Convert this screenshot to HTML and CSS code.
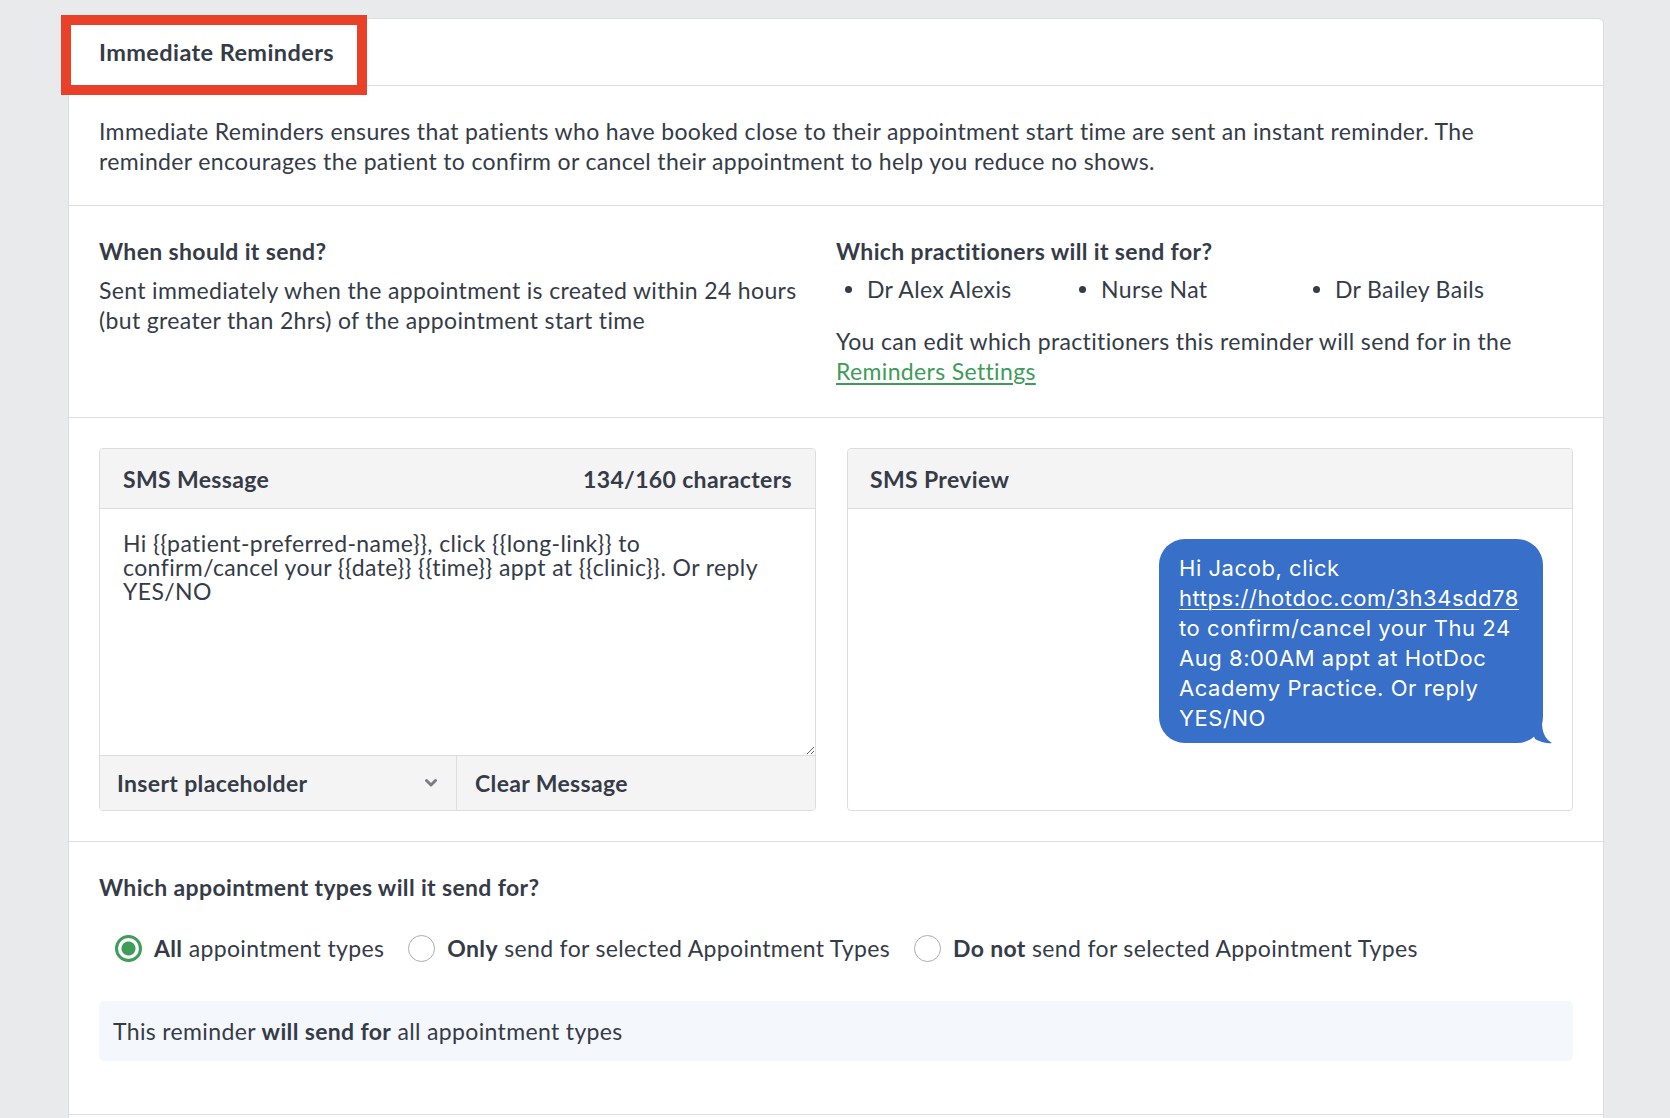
FILE: index.html
```html
<!DOCTYPE html>
<html lang="en">
<head>
<meta charset="utf-8">
<title>Immediate Reminders</title>
<link rel="stylesheet" href="styles.css">
</head>
<body>
<div class="annotation"></div>
<div class="card">
  <div class="card-header">
    <h2 class="card-title">Immediate Reminders</h2>
  </div>

  <section class="section intro">
    <p>Immediate Reminders ensures that patients who have booked close to their appointment start time are sent an instant reminder. The reminder encourages the patient to confirm or cancel their appointment to help you reduce no shows.</p>
  </section>

  <section class="section details">
    <div class="col left">
      <h3 class="label">When should it send?</h3>
      <p class="tight">Sent immediately when the appointment is created within 24 hours (but greater than 2hrs) of the appointment start time</p>
    </div>
    <div class="col">
      <h3 class="label">Which practitioners will it send for?</h3>
      <ul class="practitioners">
        <li>Dr Alex Alexis</li>
        <li>Nurse Nat</li>
        <li>Dr Bailey Bails</li>
      </ul>
      <p class="edit-note">You can edit which practitioners this reminder will send for in the <a href="#" class="link">Reminders Settings</a></p>
    </div>
  </section>

  <section class="section sms">
    <div class="box">
      <div class="box-header">
        <span>SMS Message</span>
        <span>134/160 characters</span>
      </div>
      <textarea class="message" spellcheck="false">Hi {{patient-preferred-name}}, click {{long-link}} to confirm/cancel your {{date}} {{time}} appt at {{clinic}}. Or reply YES/NO</textarea>
      <div class="toolbar">
        <div class="tool select">
          <span>Insert placeholder</span>
          <svg class="chevron" width="14" height="10" viewBox="0 0 14 10"><polyline points="2.5,2.5 7,7 11.5,2.5" fill="none" stroke="#7a7d83" stroke-width="3" stroke-linecap="round" stroke-linejoin="round"/></svg>
        </div>
        <div class="tool">Clear Message</div>
      </div>
    </div>
    <div class="box preview">
      <div class="box-header">
        <span>SMS Preview</span>
      </div>
      <div class="preview-body">
        <div class="bubble">
          Hi Jacob, click<br>
          <span class="bubble-link">https://hotdoc.com/3h34sdd78</span><br>
          to confirm/cancel your Thu 24<br>
          Aug 8:00AM appt at HotDoc<br>
          Academy Practice. Or reply<br>
          YES/NO
          <svg class="tail" width="22" height="22" viewBox="0 0 22 22"><path d="M0 0 H10 C10 10 13 17 20 21 C13 22 7 19 3 17 C2 14 0 10 0 0 Z" fill="#386fc9"/></svg>
        </div>
      </div>
    </div>
  </section>

  <section class="section types">
    <h3 class="label">Which appointment types will it send for?</h3>
    <div class="radios">
      <label class="radio"><span class="dot checked"></span><span><b>All</b> appointment types</span></label>
      <label class="radio"><span class="dot"></span><span><b>Only</b> send for selected Appointment Types</span></label>
      <label class="radio"><span class="dot"></span><span><b>Do not</b> send for selected Appointment Types</span></label>
    </div>
    <div class="info">This reminder <b>will send for</b> all appointment types</div>
  </section>

  <section class="section rest"></section>
</div>
</body>
</html>
```

FILE: styles.css
```css
* { box-sizing: border-box; }

html, body {
  margin: 0;
  padding: 0;
}

body {
  background: #e9eaec;
  font-family: Lato, "Open Sans", Arial, sans-serif;
  color: #353b47;
  font-size: 23px;
  letter-spacing: 0.35px;
  line-height: 30px;
  height: 1118px;
  overflow: hidden;
  padding: 18px 66px 0 68px;
  position: relative;
}

.annotation {
  position: absolute;
  left: 61px;
  top: 15px;
  width: 306px;
  height: 80px;
  border: 10px solid #e9402a;
  z-index: 2;
}

.card {
  background: #fff;
  border: 1px solid #dcdddf;
  border-radius: 0 6px 0 0;
  min-height: 1200px;
}

.card-header {
  padding: 18px 30px;
  border-bottom: 1px solid #dcdddf;
}

.card-title {
  margin: 0;
  font-size: 23.5px;
  letter-spacing: 0.4px;
  line-height: 30px;
  font-weight: 700;
}

.section {
  padding: 30px 30px;
  border-bottom: 1px solid #dcdddf;
}

p { margin: 0; }

.intro {
  padding: 30px 30px 29px;
}

.intro p {
  max-width: 1420px;
}

.details {
  display: grid;
  grid-template-columns: 1fr 1fr;
  padding: 30px 30px 31px;
}

.details .left {
  padding-right: 20px;
}

.label {
  margin: 0;
  font-size: 23px;
  line-height: 30px;
  font-weight: 700;
}

.tight {
  margin-top: 9px;
  line-height: 30px;
}

.practitioners {
  list-style: none;
  margin: 8px 0 0;
  padding: 0 0 0 9px;
  display: grid;
  grid-template-columns: 234px 234px 234px;
}

.practitioners li {
  display: flex;
  align-items: center;
}

.practitioners li::before {
  content: "";
  width: 7px;
  height: 7px;
  border-radius: 50%;
  background: #353b47;
  margin-right: 15px;
  flex: none;
}

.edit-note {
  margin-top: 22px;
}

.link {
  color: #3e9b58;
  text-decoration: underline;
  text-underline-offset: 3px;
}

.sms {
  display: grid;
  grid-template-columns: 717px 1fr;
  column-gap: 31px;
  padding: 30px 30px 30px;
}

.box {
  border: 1px solid #dcdddf;
  border-radius: 4px;
  display: flex;
  flex-direction: column;
  overflow: hidden;
  height: 363px;
}

.box-header {
  background: #f4f4f5;
  border-bottom: 1px solid #dcdddf;
  height: 60px;
  padding: 0 23px;
  display: flex;
  align-items: center;
  justify-content: space-between;
  font-weight: 700;
}

.preview .box-header {
  padding: 0 22px;
}

.message {
  display: block;
  width: 100%;
  height: 247px;
  border: 0;
  border-bottom: 1px solid #dcdddf;
  margin: 0;
  padding: 22px 40px 0 23px;
  font-family: Lato, "Open Sans", Arial, sans-serif;
  font-size: 23px;
  letter-spacing: 0.4px;
  line-height: 24px;
  color: #353b47;
  resize: vertical;
  outline: none;
  background: #fff;
}

.toolbar {
  flex: 1;
  display: grid;
  grid-template-columns: 357px 1fr;
  background: #f4f4f5;
  font-weight: 700;
}

.tool {
  display: flex;
  align-items: center;
  padding: 0 18px;
}

.tool.select {
  justify-content: space-between;
  border-right: 1px solid #dcdddf;
  padding: 0 18px 0 17px;
}

.chevron {
  display: block;
}

.preview-body {
  flex: 1;
  display: flex;
  justify-content: flex-end;
  align-items: flex-start;
  padding: 30px 29px 0 0;
}

.bubble {
  position: relative;
  width: 384px;
  background: #386fc9;
  color: #fff;
  border-radius: 26px;
  padding: 14px 6px 10px 20px;
  font-family: Inter, Roboto, "Helvetica Neue", Arial, sans-serif;
  font-size: 22px;
  line-height: 30px;
  letter-spacing: 0.55px;
  white-space: nowrap;
}

.bubble-link {
  text-decoration: underline;
  text-underline-offset: 3px;
  text-decoration-thickness: 1px;
}

.tail {
  position: absolute;
  right: -11px;
  bottom: -1px;
}

.types {
  padding: 30px 30px 53px;
}

.radios {
  display: flex;
  gap: 24px;
  margin-top: 31px;
  padding-left: 16px;
}

.radio {
  display: flex;
  align-items: center;
  gap: 12px;
  white-space: nowrap;
}

.radio b { font-weight: 700; }

.dot {
  width: 27px;
  height: 27px;
  border-radius: 50%;
  border: 1px solid #a9acb1;
  background: #fff;
  flex: none;
}

.dot.checked {
  border: 3px solid #3f9c5b;
  background: radial-gradient(circle, #3f9c5b 0 6.5px, #fff 7.5px);
  box-shadow: inset 0 -1px 1px rgba(0,0,0,0.08);
}

.info {
  margin-top: 38px;
  background: #f4f7fb;
  border-radius: 5px;
  padding: 15px 14px;
  line-height: 30px;
}

.info b { font-weight: 700; }

.rest {
  border-bottom: 0;
}
```
